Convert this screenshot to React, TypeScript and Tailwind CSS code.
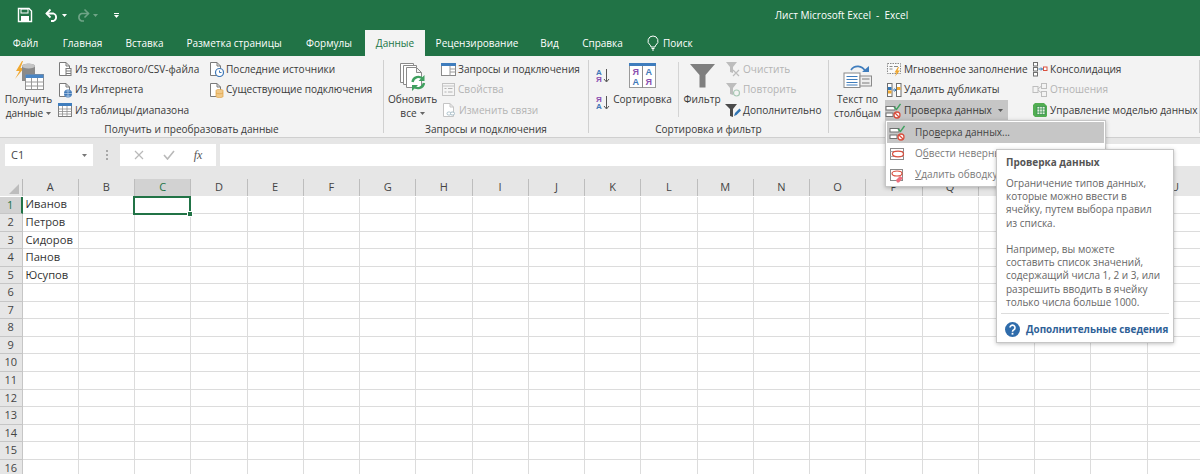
import React from "react";

type IP = { children: React.ReactNode; w?: number; h?: number; vb?: string };
const S = ({ children, w = 16, h = 16, vb }: IP) => (
  <svg width={w} height={h} viewBox={vb ?? `0 0 ${w} ${h}`} fill="none" className="shrink-0 block">{children}</svg>
);

const Doc = ({ c = "#7a7a7a" }: { c?: string }) => (
  <path d="M2.5 1.5h6.5l3.5 3.5v9.5h-10z M9 1.5v3.5h3.5" stroke={c} fill="#fff" />
);
const SaveIcon = () => (
  <S w={16} h={16}>
    <path d="M1.5 1.5h10.5l2.5 2.5v10.5h-13z" stroke="#fff" strokeWidth="1.4" />
    <rect x="4" y="2" width="7" height="4" stroke="#fff" />
    <rect x="4" y="9" width="8" height="5" fill="#fff" />
  </S>
);
const Undo = () => (
  <S w={14} h={14}>
    <g stroke="#fff" strokeWidth="1.8">
      <path d="M1.5 5.5h7a4 4 0 0 1 0 7.5H6" />
      <path d="M5.5 1.5l-4 4 4 4" />
    </g>
  </S>
);
const Redo = ({ o = 1 }: { o?: number }) => (
  <S w={14} h={14}>
    <g stroke="#fff" strokeWidth="1.6" opacity={o}>
      <path d="M12.5 5.5h-7a4 4 0 0 0 0 7.5H8" />
      <path d="M8.5 1.5l4 4-4 4" />
    </g>
  </S>
);
const Caret = ({ c = "#fff", o = 1 }: { c?: string; o?: number }) => (
  <svg width="5" height="3" viewBox="0 0 5 3" className="shrink-0" opacity={o}><path d="M0 0h5L2.5 3z" fill={c} /></svg>
);
const Bulb = () => (
  <S w={12} h={16}>
    <path d="M6 1a5 5 0 0 0-3 9c.7.6 1 1.2 1 2h4c0-.8.3-1.4 1-2a5 5 0 0 0-3-9z M4.5 13.5h3 M5 15h2" stroke="#fff" />
  </S>
);
const GetData = () => (
  <S w={32} h={32}>
    <path d="M9 1L3 11h3.5L2 19l9-11H7.5L10 1z" fill="#f0a830" />
    <path d="M9 6c0-3 13-3 13 0v15H9z" fill="#8a8a8a" />
    <ellipse cx="15.5" cy="6" rx="6.5" ry="2.4" fill="#c4c4c4" />
    <rect x="12.5" y="14.5" width="18" height="15" fill="#fff" stroke="#8f8f8f" />
    <rect x="12.5" y="14.5" width="18" height="3.5" fill="#4a86c5" />
    <path d="M12.5 22h18M12.5 26h18M18.5 18v11M24.5 18v11" stroke="#9a9a9a" />
  </S>
);
const TextCsv = () => (
  <S>
    <Doc />
    <rect x="9" y="7.5" width="5" height="7" fill="#fff" stroke="#7a7a7a" />
    <path d="M9 10h5M9 12.5h5" stroke="#7a7a7a" />
  </S>
);
const Web = () => (
  <S>
    <Doc />
    <circle cx="11" cy="11.5" r="4" fill="#3f78b8" />
    <path d="M7 11.5h8M11 7.5v8M8.5 9h5M8.5 14h5" stroke="#bcd3ea" strokeWidth=".7" />
  </S>
);
const TableI = () => (
  <S>
    <rect x="1.5" y="1.5" width="13" height="13" fill="#fff" stroke="#7f7f7f" />
    <rect x="1" y="1" width="14" height="3" fill="#3f7dbd" />
    <path d="M1.5 7h13M1.5 9.5h13M1.5 12h13M5.5 4v10M10 4v10" stroke="#8f8f8f" strokeWidth=".8" />
  </S>
);
const Recent = () => (
  <S>
    <Doc />
    <circle cx="11.5" cy="11.5" r="4" fill="#fff" stroke="#3f78b8" strokeWidth="1.2" />
    <path d="M11.5 9.5v2h2" stroke="#3f78b8" />
  </S>
);
const Existing = () => (
  <S>
    <Doc />
    <path d="M8 8.5c0-1.4 7-1.4 7 0v6c0 1.4-7 1.4-7 0z" fill="#f0c98a" stroke="#e0a040" strokeWidth=".7" />
    <path d="M8 11c1 1 6 1 7 0" stroke="#e0a040" strokeWidth=".7" />
  </S>
);
const Refresh = () => (
  <S w={30} h={30}>
    <path d="M2.5 2.5h13v19h-13z" fill="#fff" stroke="#8a8a8a" />
    <path d="M5.5 4.5h13v19h-13z" fill="#fff" stroke="#8a8a8a" />
    <path d="M8.5 6.5h10l5 5v15h-15z M18.5 6.5v5h5" fill="#fff" stroke="#8a8a8a" />
    <g stroke="#3fa05f" strokeWidth="2.4">
      <path d="M14.5 21a6 6 0 0 1 10.5-3" />
      <path d="M26 22a6 6 0 0 1-10.5 3" />
    </g>
    <path d="M26.5 14v6h-6zM14 30v-6h6z" fill="#3fa05f" />
  </S>
);
const Queries = () => (
  <S w={15} h={15}>
    <rect x=".5" y="1.5" width="14" height="12" fill="#fff" stroke="#8a8a8a" />
    <rect x="0" y="1" width="15" height="3" fill="#3f7dbd" />
    <path d="M9 4v9.5M9 7h5.5M9 10h5.5" stroke="#9a9a9a" />
  </S>
);
const Props = () => (
  <S w={15} h={15}>
    <rect x="1.5" y="1.5" width="12" height="12" fill="#f5f5f5" stroke="#c4c4c4" />
    <path d="M1.5 4h12" stroke="#c4c4c4" />
    <path d="M3.5 6.5h2M3.5 10h2M7 6.5h4.5M7 10h4.5" stroke="#b4b4b4" />
  </S>
);
const EditLinks = () => (
  <S>
    <Doc c="#c4c4c4" />
    <rect x="6" y="10" width="4" height="3" rx="1.5" stroke="#a9bfc9" fill="#fff" />
    <rect x="9.5" y="10" width="4" height="3" rx="1.5" stroke="#a9bfc9" fill="#fff" />
  </S>
);
const L = ({ x, y, t, c, s = 8 }: { x: number; y: number; t: string; c: string; s?: number }) => (
  <text x={x} y={y} fontSize={s} fontWeight="700" fontFamily="'Liberation Sans',sans-serif" fill={c}>{t}</text>
);
const SortSmall = ({ a, b }: { a: string; b: string }) => (
  <S w={14} h={16}>
    <L x={0} y={7} t={a} c={a === "А" ? "#3f78b8" : "#8a4fb0"} />
    <L x={0} y={14} t={b} c={b === "А" ? "#3f78b8" : "#8a4fb0"} />
    <path d="M10.5 1v12.5M8 11l2.5 3 2.5-3" stroke="#555" />
  </S>
);
const SortBig = () => (
  <S w={27} h={25}>
    <rect x=".5" y=".5" width="26" height="24" fill="#fff" stroke="#9a9a9a" />
    <rect x="0" y="0" width="27" height="3" fill="#3f7dbd" />
    <path d="M13.5 3v22" stroke="#8a8a8a" />
    <L x={3.5} y={12} t="Я" c="#8a4fb0" s={9} />
    <L x={16.5} y={12} t="А" c="#3f78b8" s={9} />
    <L x={3.5} y={22} t="А" c="#3f78b8" s={9} />
    <L x={16.5} y={22} t="Я" c="#8a4fb0" s={9} />
  </S>
);
const Funnel = () => (
  <S w={25} h={25}>
    <path d="M0 1h25L15.5 12v12.5h-6V12z" fill="#7f7f7f" />
  </S>
);
const FClear = () => (
  <S w={16} h={16}>
    <path d="M1 1h11L8 6v6l-3-1V6z" fill="#bdbdbd" />
    <path d="M8 9l6 6M14 9l-6 6" stroke="#bdbdbd" strokeWidth="1.2" />
  </S>
);
const FRe = () => (
  <S w={16} h={16}>
    <path d="M1 1h11L8 6v7l-3-1V6z" fill="#bdbdbd" />
    <circle cx="11.5" cy="11" r="3" stroke="#a8c8b4" strokeWidth="1.2" />
  </S>
);
const FAdv = () => (
  <S w={16} h={16}>
    <path d="M0 2h12L8 7v8l-3-1V7z" fill="#4a4a4a" />
    <path d="M9 14l1-3 4.5-4.5 1.5 2-4.5 4.5z" fill="#2f75b5" />
  </S>
);
const TextCols = () => (
  <S w={29} h={24}>
    <rect x="1" y="9" width="16" height="14.5" fill="#fff" stroke="#8a8a8a" />
    <path d="M3.5 12.5h11M3.5 15.5h11M3.5 18.5h11M3.5 21h11" stroke="#3f7dbd" />
    <rect x="17" y="12" width="11.5" height="10" fill="#eee" stroke="#8a8a8a" />
    <path d="M19 15h7.5M19 19h7.5" stroke="#7a7a7a" />
    <path d="M8 6a8 8 0 0 1 14 1" stroke="#3f7dbd" strokeWidth="1.6" />
    <path d="M19 8h7V2z" fill="#3f7dbd" />
  </S>
);
const Flash = () => (
  <S>
    <rect x="1.5" y="2.5" width="13" height="10" fill="#fafafa" stroke="#8a8a8a" strokeDasharray="1.5 1" />
    <path d="M3.5 5.5h3M3.5 8h3M8 5.5h4" stroke="#8a8a8a" />
    <path d="M12 6L8.5 11.5h2L9 15.5l5-6h-2.4L13 6z" fill="#f0a830" />
  </S>
);
const Dups = () => (
  <S>
    <rect x="1.5" y="1.5" width="4.5" height="13" fill="#fff" stroke="#6f6f6f" />
    <rect x="10.5" y="1.5" width="4.5" height="13" fill="#fff" stroke="#6f6f6f" />
    <rect x="2" y="5" width="3.5" height="3" fill="#2f75b5" />
    <rect x="2" y="8.5" width="3.5" height="3" fill="#f0a830" />
    <rect x="11" y="5" width="3.5" height="3" fill="#f0a830" />
    <path d="M7 8h3M8.5 6.5L10 8 8.5 9.5" stroke="#2f75b5" />
  </S>
);
const Valid = () => (
  <S>
    <rect x="1" y="3.5" width="9" height="3.5" fill="#fff" stroke="#6f6f6f" />
    <rect x="1" y="10" width="7" height="3.5" fill="#fff" stroke="#6f6f6f" />
    <path d="M9 4l2.5 2.5L15.5 1" stroke="#3fa05f" strokeWidth="1.4" />
    <circle cx="12" cy="12" r="3" fill="#fff" stroke="#d9503f" strokeWidth="1.3" />
    <path d="M10 10l4 4" stroke="#d9503f" strokeWidth="1.2" />
  </S>
);
const Consol = () => (
  <S>
    <rect x="1.5" y="1.5" width="4" height="3.5" fill="#fff" stroke="#6f6f6f" />
    <rect x="1.5" y="6.5" width="4" height="3.5" fill="#fff" stroke="#6f6f6f" />
    <rect x="1.5" y="11.5" width="4" height="3.5" fill="#fff" stroke="#6f6f6f" />
    <path d="M6.5 8h4M9 6.5L10.5 8 9 9.5" stroke="#2f75b5" />
    <rect x="11.5" y="6" width="3.5" height="3.5" fill="#fff" stroke="#d9503f" />
  </S>
);
const Rel = () => (
  <S>
    <rect x="1" y="4.5" width="5" height="6" fill="#f3f3f3" stroke="#bdbdbd" />
    <rect x="9.5" y="1.5" width="5" height="5" fill="#f3f3f3" stroke="#bdbdbd" />
    <rect x="9.5" y="9.5" width="5" height="5" fill="#f3f3f3" stroke="#bdbdbd" />
    <path d="M6 7l3.5-3M6 8l3.5 3" stroke="#bdbdbd" />
  </S>
);
const Model = () => (
  <S>
    <path d="M3 1h9l3 3v10l-1 1H3l-2-2V3z" fill="#52ad52" />
    <rect x="5" y="4.5" width="8" height="8" fill="#e5f3df" stroke="#2f8a4a" strokeWidth=".7" />
    <path d="M5 7h8M5 10h8M7.7 4.5v8M10.3 4.5v8" stroke="#2f8a4a" strokeWidth=".7" />
  </S>
);
const Circle = () => (
  <S>
    <rect x="1.5" y="2.5" width="13" height="11" fill="#fff" stroke="#8a8a8a" />
    <path d="M1.5 5.5h13M1.5 10.5h13" stroke="#a9a9a9" />
    <ellipse cx="9" cy="8" rx="5.5" ry="2.8" fill="#fff" stroke="#d9503f" strokeWidth="1.2" />
  </S>
);
const ClearC = () => (
  <S>
    <rect x="1.5" y="2.5" width="12" height="11" fill="#fff" stroke="#8a8a8a" />
    <ellipse cx="8" cy="6.5" rx="5" ry="2.5" fill="#fff" stroke="#d9503f" strokeWidth="1.2" />
    <path d="M7 13l4-4 3 2-4 4.5H8z" fill="#ee6f7e" />
  </S>
);
const Help = () => (
  <S w={15} h={15}>
    <circle cx="7.5" cy="7.5" r="7.5" fill="#2f6cab" />
    <path d="M5 5.6a2.5 2.5 0 1 1 3.8 2.2c-.9.5-1.3.9-1.3 1.9" stroke="#fff" strokeWidth="1.6" />
    <rect x="6.6" y="10.8" width="1.8" height="1.8" fill="#fff" />
  </S>
);

const Small = ({ icon, text, off }: { icon: React.ReactNode; text: string; off?: boolean }) => (
  <div className={`flex h-[20.5px] items-center gap-[2px] whitespace-nowrap ${off ? "text-[#b4b4b4]" : "text-[#3a3a3a]"}`}>
    {icon}
    <span>{text}</span>
  </div>
);
const Big = ({ icon, a, b, w, caret }: { icon: React.ReactNode; a: string; b?: string; w: string; caret?: boolean }) => (
  <div className={`flex shrink-0 flex-col items-center text-[#3a3a3a] leading-[14px] whitespace-nowrap ${w}`}>
    <div className="flex h-[33px] items-center justify-center">{icon}</div>
    <span>{a}</span>
    {b && (
      <span className="flex items-center gap-[3px]">
        {b}
        {caret && <Caret c="#666" />}
      </span>
    )}
  </div>
);
const Group = ({ w, label, children }: { w: string; label: string; children: React.ReactNode }) => (
  <div className={`flex h-full ${w}`}>
    <div className="flex min-w-0 flex-1 flex-col">
      <div className="flex flex-1 pt-[3px]">{children}</div>
      <div className="h-[15px] text-center leading-[14px] text-[#3a3a3a] whitespace-nowrap">{label}</div>
    </div>
    <div className="my-[4px] w-px shrink-0 bg-[#d0d0d0]" />
  </div>
);

const tabs: [string, string][] = [
  ["Файл", "w-[51px]"],
  ["Главная", "w-[63px]"],
  ["Вставка", "w-[61px]"],
  ["Разметка страницы", "w-[118px]"],
  ["Формулы", "w-[72px]"],
  ["Данные", "w-[60px]"],
  ["Рецензирование", "w-[104px]"],
  ["Вид", "w-[41px]"],
  ["Справка", "w-[65px]"],
];
const cols = "ABCDEFGHIJKLMNOPQRSTU".split("");
const rows = Array.from({ length: 16 }, (_, i) => i + 1);
const names = ["Иванов", "Петров", "Сидоров", "Панов", "Юсупов"];
const coveredCols = ["R", "S", "T"];
const tipText = [
  "Ограничение типов данных,",
  "которые можно ввести в",
  "ячейку, путем выбора правил",
  "из списка.",
  "\u00a0",
  "Например, вы можете",
  "составить список значений,",
  "содержащий числа 1, 2 и 3, или",
  "разрешить вводить в ячейку",
  "только числа больше 1000.",
];

export default function App() {
  return (
    <div className="relative h-[474px] w-[1200px] overflow-hidden bg-white font-['Open_Sans',sans-serif] text-[10.1px]">
      <div className="flex h-[30px] items-center bg-[#217346] text-white">
        <div className="ml-[17px]"><SaveIcon /></div>
        <div className="ml-[12px]"><Undo /></div>
        <div className="ml-[3px]"><Caret /></div>
        <div className="ml-[9px]"><Redo o={0.35} /></div>
        <div className="ml-[3px]"><Caret o={0.35} /></div>
        <div className="ml-[16px] flex flex-col items-center gap-[1px]">
          <div className="h-px w-[5px] bg-white" />
          <Caret />
        </div>
        <div className="ml-[656px] whitespace-pre text-[10px]">Лист Microsoft Excel  -  Excel</div>
      </div>
      <div className="flex h-[26px] bg-[#217346] text-[10px] text-white">
        {tabs.map(([t, w]) => (
          <div key={t} className={`flex items-center justify-center whitespace-nowrap ${w} ${t === "Данные" ? "bg-[#f3f3f3] text-[#217346]" : ""}`}>{t}</div>
        ))}
        <div className="ml-[12px] flex items-center gap-[4px]">
          <Bulb />
          <span>Поиск</span>
        </div>
      </div>

      <div className="flex h-[82px] border-b border-[#cfcfcf] bg-[#f3f3f3]">
        <Group w="w-[384px]" label="Получить и преобразовать данные">
          <Big w="w-[57px]" icon={<GetData />} a="Получить" b="данные" caret />
          <div className="w-[151px]">
            <Small icon={<TextCsv />} text="Из текстового/CSV-файла" />
            <Small icon={<Web />} text="Из Интернета" />
            <Small icon={<TableI />} text="Из таблицы/диапазона" />
          </div>
          <div>
            <Small icon={<Recent />} text="Последние источники" />
            <Small icon={<Existing />} text="Существующие подключения" />
          </div>
        </Group>
        <Group w="w-[205px]" label="Запросы и подключения">
          <Big w="w-[57px]" icon={<Refresh />} a="Обновить" b="все" caret />
          <div>
            <Small icon={<Queries />} text="Запросы и подключения" />
            <Small icon={<Props />} text="Свойства" off />
            <Small icon={<EditLinks />} text="Изменить связи" off />
          </div>
        </Group>
        <Group w="w-[240px]" label="Сортировка и фильтр">
          <div className="ml-[7px] flex w-[16px] flex-col gap-[11px] pt-[9px]">
            <SortSmall a="А" b="Я" />
            <SortSmall a="Я" b="А" />
          </div>
          <Big w="w-[61px]" icon={<SortBig />} a="Сортировка" />
          <div className="mb-[5px] mt-[3px] ml-[5px] w-px bg-[#d4d4d4]" />
          <Big w="w-[46px]" icon={<Funnel />} a="Фильтр" />
          <div>
            <Small icon={<FClear />} text="Очистить" off />
            <Small icon={<FRe />} text="Повторить" off />
            <Small icon={<FAdv />} text="Дополнительно" />
          </div>
        </Group>
        <Group w="w-[371px]" label="">
          <Big w="w-[57px]" icon={<TextCols />} a="Текст по" b="столбцам" />
          <div className="w-[146px] shrink-0">
            <Small icon={<Flash />} text="Мгновенное заполнение" />
            <Small icon={<Dups />} text="Удалить дубликаты" />
            <div className="-ml-px flex h-[21px] w-[123px] items-center gap-[3px] bg-[#c6c6c6] pr-[5px] text-[#3a3a3a] whitespace-nowrap">
              <Valid />
              <span>Проверка данных</span>
              <span className="ml-auto"><Caret c="#555" /></span>
            </div>
          </div>
          <div>
            <Small icon={<Consol />} text="Консолидация" />
            <Small icon={<Rel />} text="Отношения" off />
            <Small icon={<Model />} text="Управление моделью данных" />
          </div>
        </Group>
      </div>

      <div className="flex h-[41px] items-center bg-[#e6e6e6] pb-[7px]">
        <div className="ml-[5px] flex h-[22px] w-[88px] items-center justify-between bg-white px-[6px] text-[11px] text-[#444]">
          <span>C1</span>
          <Caret c="#777" />
        </div>
        <div className="ml-[13px] flex flex-col gap-[2px]">
          <div className="h-[2px] w-[2px] bg-[#a8a8a8]" />
          <div className="h-[2px] w-[2px] bg-[#a8a8a8]" />
          <div className="h-[2px] w-[2px] bg-[#a8a8a8]" />
        </div>
        <div className="ml-[12px] flex h-[22px] w-[96px] items-center justify-around bg-white px-[4px]">
          <S w={10} h={10}><path d="M1 1l8 8M9 1l-8 8" stroke="#b9b9b9" strokeWidth="1.2" /></S>
          <S w={12} h={10}><path d="M1 5l3.5 4L11 1" stroke="#b9b9b9" strokeWidth="1.6" /></S>
          <span className="font-['Liberation_Serif',serif] text-[12px] italic text-[#555]">fx</span>
        </div>
        <div className="ml-[4px] h-[22px] flex-1 bg-white" />
      </div>

      <div className="grid grid-cols-[22.5px_repeat(21,56.25px)] auto-rows-[17.55px] text-[11.2px] text-[#333]">
        <div className="flex h-[17px] items-end justify-end border-r border-[#b8b8b8] bg-[#e6e6e6] pb-[2px] pr-[3px]">
          <svg width="10" height="10" viewBox="0 0 10 10"><path d="M10 0v10H0z" fill="#bdbdbd" /></svg>
        </div>
        {cols.map((c) => (
          <div key={c} className={`flex h-[17px] items-center justify-center border-r border-[#bdbdbd] text-[11px] ${c === "C" ? "bg-[#d2d2d2] text-[#217346]" : "bg-[#e6e6e6] text-[#444]"}`}>{coveredCols.includes(c) ? "" : c}</div>
        ))}
        {rows.map((r) => (
          <React.Fragment key={r}>
            <div className={`flex items-center justify-center border-b text-[11px] ${r === 1 ? "border-r-2 border-b-[#c6c6c6] border-r-[#217346] bg-[#d2d2d2] text-[#217346]" : "border-r border-[#c6c6c6] bg-[#e6e6e6] text-[#444]"}`}>{r}</div>
            {cols.map((c) => (
              <div key={c} className="relative flex items-center whitespace-nowrap border-b border-r border-[#dcdcdc] pl-[3px]">
                {c === "A" ? names[r - 1] : ""}
                {c === "C" && r === 1 && (
                  <div className="absolute -left-[2px] -top-[1px] -bottom-[2px] -right-[1px] z-10 border-2 border-[#217346]">
                    <div className="absolute -bottom-[4px] -right-[4px] h-[6px] w-[6px] border border-white bg-[#217346]" />
                  </div>
                )}
              </div>
            ))}
          </React.Fragment>
        ))}
      </div>

      <div className="absolute left-[885px] top-[120px] z-20 h-[67px] w-[221px] border border-[#c6c6c6] bg-white p-[1px] text-[10px] text-[#7a7a7a] shadow-[0_1px_4px_rgba(0,0,0,0.25)]">
        <div className="flex h-[21px] items-center gap-[10px] bg-[#c6c6c6] pl-[2px] text-[#444]">
          <Valid />
          <span>Про<span className="underline">в</span>ерка данных...</span>
        </div>
        <div className="flex h-[21px] items-center gap-[10px] pl-[2px] whitespace-nowrap">
          <Circle />
          <span className="w-[81px] overflow-hidden">О<span className="underline">б</span>вести неверные данные</span>
        </div>
        <div className="flex h-[21px] items-center gap-[10px] pl-[2px] whitespace-nowrap">
          <ClearC />
          <span className="w-[81px] overflow-hidden"><span className="underline">У</span>далить обводку неверных данных</span>
        </div>
      </div>

      <div className="absolute left-[996px] top-[149px] z-30 h-[194px] w-[178px] border border-[#c6c6c6] bg-white shadow-[0_1px_4px_rgba(0,0,0,0.25)]">
        <div className="pl-[9px] pt-[5px] text-[10px] font-bold leading-[14px] text-[#555]">Проверка данных</div>
        <div className="pl-[9px] pt-[8px] text-[10px] leading-[13.2px] text-[#666] whitespace-nowrap">
          {tipText.map((t, i) => (
            <div key={i}>{t}</div>
          ))}
        </div>
        <div className="mx-[4px] mt-[4px] h-px bg-[#dcdcdc]" />
        <div className="flex items-center gap-[6px] pl-[8px] pt-[8px] text-[9.9px] font-bold text-[#2f6197] whitespace-nowrap">
          <Help />
          <span>Дополнительные сведения</span>
        </div>
      </div>
    </div>
  );
}
